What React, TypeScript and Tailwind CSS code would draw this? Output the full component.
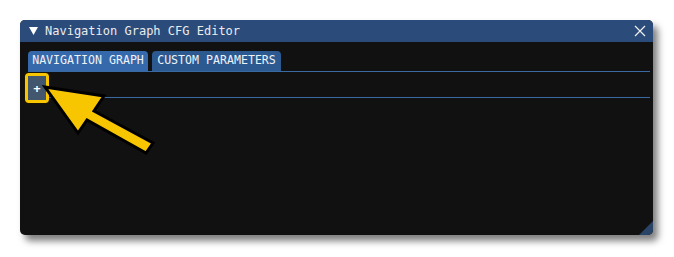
const mono = "font-['DejaVu_Sans_Mono','Liberation_Mono',monospace]";

function Arrow() {
  return (
    <svg
      className="pointer-events-none absolute left-0 top-0"
      width="674"
      height="257"
      viewBox="0 0 674 257"
    >
      <polygon
        points="45,87 104,96 94,111 153,143 146,153 87,120 78,133"
        fill="#f7c600"
        stroke="#000"
        strokeWidth="3"
        strokeLinejoin="miter"
      />
    </svg>
  );
}

export default function App() {
  return (
    <div className="relative h-[257px] w-[674px] overflow-hidden bg-white">
      <div className="pl-[20px] pt-[20px]">
        <div className="relative flex h-[215px] w-[633px] flex-col overflow-hidden rounded-[5px] bg-[#111111] shadow-[5px_6px_7px_rgba(0,0,0,0.5)]">
          {/* title bar */}
          <div className="flex h-[22px] items-center bg-[#2b4b7b] pl-[9px] pr-[7px]">
            <svg width="9" height="8" viewBox="0 0 9 8">
              <polygon points="0,0 9,0 4.5,8" fill="#ffffff" />
            </svg>
            <span className={`${mono} ml-[7px] text-[12px] leading-none text-[#ececec]`}>
              Navigation Graph CFG Editor
            </span>
            <svg className="ml-auto" width="12" height="12" viewBox="0 0 12 12">
              <path d="M1 1 L11 11 M11 1 L1 11" stroke="#f0f0f0" strokeWidth="1.2" />
            </svg>
          </div>

          {/* body */}
          <div className="flex flex-1 flex-col pl-[8px] pr-[3px] pt-[9px]">
            <div className="flex gap-[4px] border-b border-[#3a6aa3]">
              <div
                className={`${mono} flex h-[20px] w-[120px] items-center justify-center rounded-t-[4px] bg-[#3569ab] text-[11.6px] text-[#eef2f8]`}
              >
                NAVIGATION GRAPH
              </div>
              <div
                className={`${mono} flex h-[20px] w-[129px] items-center justify-center rounded-t-[4px] bg-[#2c5990] text-[11.6px] text-[#eef2f8]`}
              >
                CUSTOM PARAMETERS
              </div>
            </div>

            <div className="flex items-end pt-[4px]">
              <div className="-m-[3px] rounded-[3px] border-[3px] border-[#f7c600] outline outline-1 outline-[#1a1400]">
                <div className="flex h-[24px] w-[18px] items-center justify-center bg-[#42576d] text-[13px] font-bold leading-none text-white">
                  +
                </div>
              </div>
              <div className="mb-[2px] ml-[3px] h-px flex-1 bg-[#3a6aa3]" />
            </div>
          </div>

          {/* resize grip */}
          <svg className="absolute bottom-0 right-0" width="16" height="16" viewBox="0 0 16 16">
            <polygon points="2,16 16,2 16,16" fill="#2a4468" />
          </svg>
        </div>
      </div>
      <Arrow />
    </div>
  );
}
